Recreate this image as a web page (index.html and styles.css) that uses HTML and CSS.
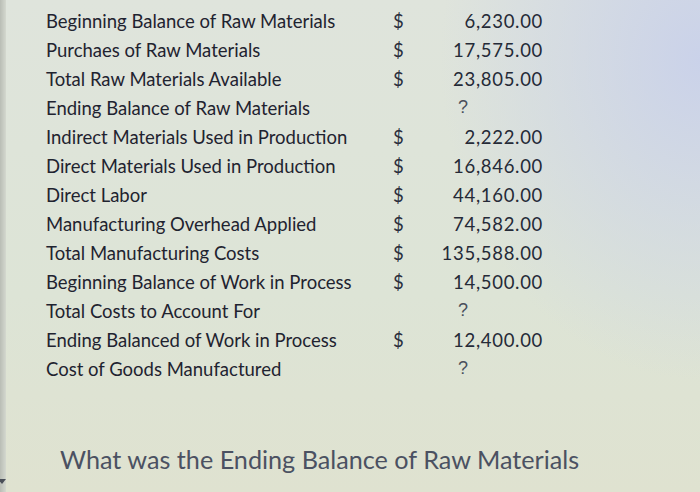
FILE: index.html
```html
<!DOCTYPE html>
<html lang="en">
<head>
<meta charset="utf-8">
<title>Cost of Goods Manufactured</title>
<link rel="stylesheet" href="styles.css">
</head>
<body>
<div class="screen">
  <div class="edge"><span class="arrow"></span></div>
  <div class="content">
    <div class="sheet">
      <div class="row"><span class="label">Beginning Balance of Raw Materials</span><span class="cur">$</span><span class="amt">6,230.00</span></div>
      <div class="row"><span class="label">Purchaes of Raw Materials</span><span class="cur">$</span><span class="amt">17,575.00</span></div>
      <div class="row"><span class="label">Total Raw Materials Available</span><span class="cur">$</span><span class="amt">23,805.00</span></div>
      <div class="row"><span class="label">Ending Balance of Raw Materials</span><span class="cur"></span><span class="amt q">?</span></div>
      <div class="row"><span class="label">Indirect Materials Used in Production</span><span class="cur">$</span><span class="amt">2,222.00</span></div>
      <div class="row"><span class="label">Direct Materials Used in Production</span><span class="cur">$</span><span class="amt">16,846.00</span></div>
      <div class="row"><span class="label">Direct Labor</span><span class="cur">$</span><span class="amt">44,160.00</span></div>
      <div class="row"><span class="label">Manufacturing Overhead Applied</span><span class="cur">$</span><span class="amt">74,582.00</span></div>
      <div class="row"><span class="label">Total Manufacturing Costs</span><span class="cur">$</span><span class="amt">135,588.00</span></div>
      <div class="row"><span class="label">Beginning Balance of Work in Process</span><span class="cur">$</span><span class="amt">14,500.00</span></div>
      <div class="row"><span class="label">Total Costs to Account For</span><span class="cur"></span><span class="amt q">?</span></div>
      <div class="row"><span class="label">Ending Balanced of Work in Process</span><span class="cur">$</span><span class="amt">12,400.00</span></div>
      <div class="row"><span class="label">Cost of Goods Manufactured</span><span class="cur"></span><span class="amt q">?</span></div>
    </div>
    <p class="question">What was the Ending Balance of Raw Materials</p>
  </div>
</div>
</body>
</html>
```
FILE: styles.css
```css
html, body {
  margin: 0;
  padding: 0;
}
body {
  width: 700px;
  height: 492px;
  overflow: hidden;
  font-family: Lato, "Open Sans", "Liberation Sans", sans-serif;
}
.screen {
  display: flex;
  width: 700px;
  height: 492px;
  background:
    radial-gradient(ellipse 260px 320px at 700px 60px, rgba(200, 208, 235, 0.9), rgba(200, 208, 235, 0) 100%),
    linear-gradient(180deg, #dfe4dc 0%, #dde4d6 60%, #dfe2d0 100%);
}
.edge {
  width: 6px;
  flex: none;
  background: linear-gradient(90deg, #b9bdb5, #d4d8cf);
  display: flex;
  flex-direction: column;
  justify-content: flex-end;
  padding-bottom: 8px;
}
.arrow {
  width: 0;
  height: 0;
  border-left: 4px solid transparent;
  border-right: 4px solid transparent;
  border-top: 5px solid #4a4f58;
  margin-left: -2px;
}
.content {
  flex: 1;
  display: flex;
  flex-direction: column;
}
.sheet {
  display: flex;
  flex-direction: column;
  padding: 6px 0 0 40px;
}
.row {
  display: grid;
  grid-template-columns: 347px 40px 110px;
  height: 29px;
  align-items: center;
  font-size: 18.5px;
  color: #1f2330;
}
.label {
  white-space: nowrap;
}
.cur {
  color: #2a2f3d;
}
.amt {
  text-align: right;
  color: #252a37;
  letter-spacing: 0.7px;
}
.amt.q {
  text-align: left;
  padding-left: 25px;
  color: #4a4f5b;
  font-family: "Liberation Sans", Lato, sans-serif;
  font-size: 18px;
}
.question {
  margin: 61px 0 0 54px;
  font-size: 25.2px;
  color: #4b5162;
}
```
